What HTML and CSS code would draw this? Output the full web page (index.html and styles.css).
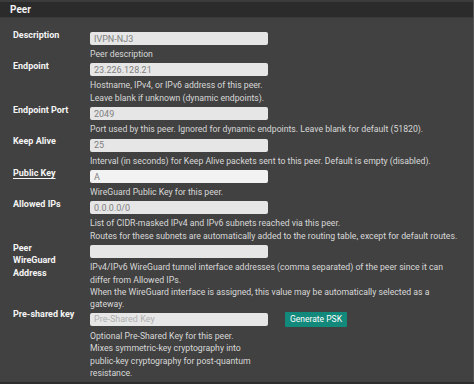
FILE: index.html
```html
<!DOCTYPE html>
<html lang="en">
<head>
    <meta charset="UTF-8">
    <title>Peer</title>
    <link rel="stylesheet" href="styles.css">
</head>
<body>
    <div class="panel">
        <div class="panel-heading">Peer</div>
        <div class="panel-body">
            <div class="row">
                <label for="descr">Description</label>
                <div class="field">
                    <input type="text" id="descr" value="IVPN-NJ3">
                    <p class="help">Peer description</p>
                </div>
            </div>
            <div class="row">
                <label for="endpoint">Endpoint</label>
                <div class="field">
                    <input type="text" id="endpoint" value="23.226.128.21">
                    <p class="help">Hostname, IPv4, or IPv6 address of this peer.<br>Leave blank if unknown (dynamic endpoints).</p>
                </div>
            </div>
            <div class="row">
                <label for="port">Endpoint Port</label>
                <div class="field">
                    <input type="text" id="port" value="2049">
                    <p class="help">Port used by this peer. Ignored for dynamic endpoints. Leave blank for default (51820).</p>
                </div>
            </div>
            <div class="row">
                <label for="keepalive">Keep Alive</label>
                <div class="field">
                    <input type="text" id="keepalive" value="25">
                    <p class="help">Interval (in seconds) for Keep Alive packets sent to this peer. Default is empty (disabled).</p>
                </div>
            </div>
            <div class="row">
                <label for="pubkey" class="link">Public Key</label>
                <div class="field">
                    <input type="text" id="pubkey" class="masked" value="A">
                    <p class="help">WireGuard Public Key for this peer.</p>
                </div>
            </div>
            <div class="row">
                <label for="allowed">Allowed IPs</label>
                <div class="field">
                    <input type="text" id="allowed" value="0.0.0.0/0">
                    <p class="help">List of CIDR-masked IPv4 and IPv6 subnets reached via this peer.<br>Routes for these subnets are automatically added to the routing table, except for default routes.</p>
                </div>
            </div>
            <div class="row">
                <label for="peeraddr">Peer<br>WireGuard<br>Address</label>
                <div class="field">
                    <input type="text" id="peeraddr" value="">
                    <p class="help">IPv4/IPv6 WireGuard tunnel interface addresses (comma separated) of the peer since it can differ from Allowed IPs.<br>When the WireGuard interface is assigned, this value may be automatically selected as a gateway.</p>
                </div>
            </div>
            <div class="row tight">
                <label for="psk">Pre-shared key</label>
                <div class="field">
                    <div class="inline">
                        <input type="text" id="psk" placeholder="Pre-Shared Key">
                        <button type="button">Generate PSK</button>
                    </div>
                    <p class="help narrow">Optional Pre-Shared Key for this peer.<br>Mixes symmetric-key cryptography into public-key cryptography for post-quantum resistance.</p>
                </div>
            </div>
        </div>
    </div>
</body>
</html>
```

FILE: styles.css
```css
html, body {
    margin: 0;
    background-color: #2e2e2e;
}
body {
    font-family: Roboto, 'Liberation Sans', sans-serif;
    color: #dcdcdc;
    width: 474px;
    height: 384px;
    overflow: hidden;
}
.panel {
    background-color: #414141;
    border-right: 1px solid #555;
    height: 382px;
    box-sizing: border-box;
}
.panel-heading {
    background-color: #2b2b2b;
    border-top: 2px solid #3b3b3b;
    border-bottom: 1px solid #393939;
    height: 15px;
    line-height: 15px;
    padding-left: 10px;
    font-size: 10px;
    font-weight: bold;
    color: #f2f2f2;
}
.panel-body {
    padding-top: 14px;
}
.row {
    display: grid;
    grid-template-columns: 77px 1fr;
    padding-left: 13px;
    margin-bottom: 3px;
}
.row.tight {
    margin-top: -2px;
}
label {
    font-size: 9px;
    font-weight: bold;
    color: #f4f4f4;
    line-height: 12.5px;
    margin-top: -3.5px;
}
label.link {
    text-decoration: underline;
    text-underline-offset: 2px;
}
.field {
    max-width: 372px;
}
.field input {
    display: block;
    width: 178px;
    height: 13px;
    box-sizing: border-box;
    border: none;
    border-radius: 2px;
    background-color: #e6e6e6;
    color: #808080;
    font-family: inherit;
    font-size: 9px;
    padding: 0 4px;
    margin: 0;
}
.field input.masked {
    background-color: #f2f2f2;
}
.field input::placeholder {
    color: #b0b0b0;
}
.help {
    margin: 3px 0 0;
    font-size: 8.7px;
    line-height: 12.4px;
    color: #d8d8d8;
}
.help.narrow {
    max-width: 165px;
}
.inline {
    display: flex;
    align-items: center;
    gap: 17px;
}
button {
    background-color: #12897b;
    color: #fff;
    border: none;
    border-radius: 1px;
    font-family: inherit;
    font-size: 8.5px;
    height: 15px;
    padding: 0 5px;
    cursor: pointer;
}
```
